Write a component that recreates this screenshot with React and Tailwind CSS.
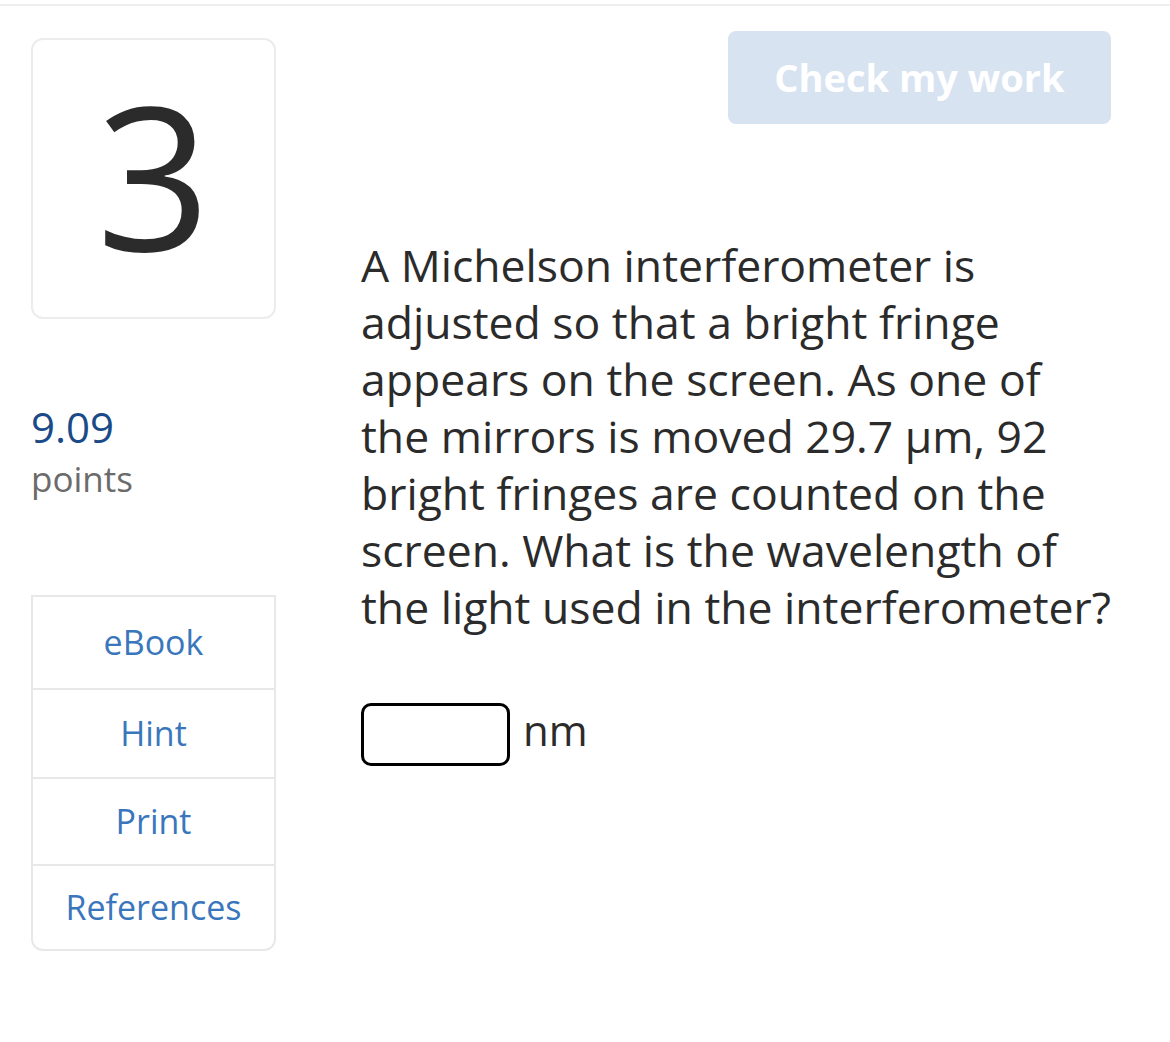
export default function App() {
    const lines = [
        "A Michelson interferometer is",
        "adjusted so that a bright fringe",
        "appears on the screen. As one of",
        "the mirrors is moved 29.7 µm, 92",
        "bright fringes are counted on the",
        "screen. What is the wavelength of",
        "the light used in the interferometer?",
    ];
    const tools = [
        { label: "eBook", h: "h-[91px]" },
        { label: "Hint", h: "h-[89px]" },
        { label: "Print", h: "h-[87px]" },
        { label: "References", h: "h-[85px]" },
    ];

    return (
        <div className="w-[1170px] h-[1042px] bg-white text-[#2b2b2b]" style={{ fontFamily: "'Open Sans', Lato, sans-serif" }}>
            <div className="h-[4px]" />
            <div className="h-[2px] bg-[#efefef]" />

            <div className="flex pl-[31px] pr-[60px]">
                {/* Left column */}
                <div className="w-[245px] shrink-0 pt-[32px]">
                    <div className="h-[281px] rounded-[12px] border-2 border-[#ececec] flex items-center justify-center">
                        <span className="text-[200px] leading-none font-normal text-[#2b2b2b] -mt-[10px]">3</span>
                    </div>

                    <div className="mt-[86px] text-[42px] leading-[44px] text-[#1b4a88]">9.09</div>
                    <div className="mt-[11px] text-[35px] leading-[38px] text-[#6b6b6b]">points</div>

                    <div className="mt-[97px] rounded-b-[12px] border-2 border-[#e8e8e8]">
                        {tools.map((t, i) => (
                            <div
                                key={t.label}
                                className={`${t.h} flex items-center justify-center text-[34px] text-[#3a76bc] ${i > 0 ? "border-t-2 border-[#e8e8e8]" : ""}`}
                            >
                                {t.label}
                            </div>
                        ))}
                    </div>
                </div>

                {/* Right column */}
                <div className="flex-1 flex flex-col pl-[85px]">
                    <button className="self-end mt-[25px] w-[383px] h-[93px] rounded-[8px] bg-[#d8e3f1] text-white text-[38px] font-bold">
                        Check my work
                    </button>

                    <div className="mt-[112px] text-[44.5px] leading-[57px] whitespace-nowrap">
                        {lines.map((l) => (
                            <div key={l}>{l}</div>
                        ))}
                    </div>

                    <div className="mt-[68px] flex items-center gap-[13px]">
                        <div className="w-[149px] h-[63px] rounded-[10px] border-[3px] border-black" />
                        <span className="text-[42px] leading-none -mt-[10px]">nm</span>
                    </div>
                </div>
            </div>
        </div>
    );
}
